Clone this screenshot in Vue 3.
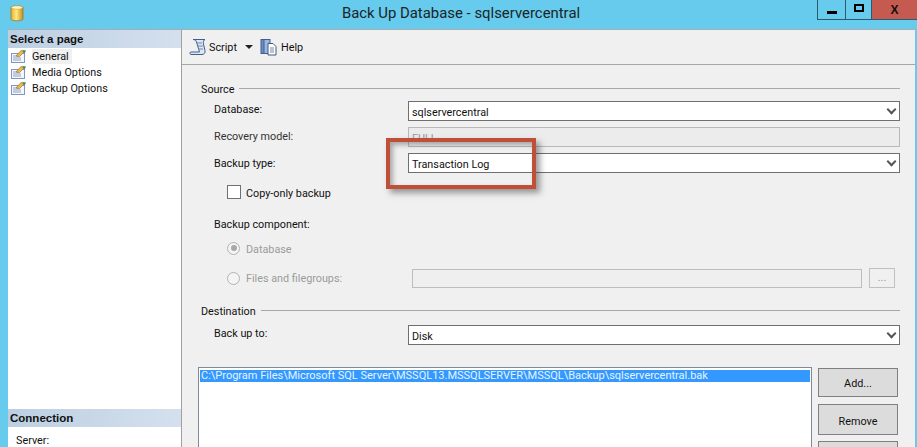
<script setup>
const pages = ['General', 'Media Options', 'Backup Options']
</script>

<template>
  <div class="window">
    <header class="titlebar">
      <svg class="db-icon" width="14" height="18" viewBox="0 0 14 18">
        <defs>
          <linearGradient id="dbg" x1="0" x2="1" y1="0" y2="0">
            <stop offset="0" stop-color="#e8b030" />
            <stop offset="0.45" stop-color="#fde880" />
            <stop offset="1" stop-color="#c98c18" />
          </linearGradient>
        </defs>
        <path d="M1 3.5C1 1.5 13 1.5 13 3.5V15C13 17.4 1 17.4 1 15Z" fill="url(#dbg)" stroke="#9a7a30" stroke-width=".8" />
        <ellipse cx="7" cy="3.5" rx="5.6" ry="1.8" fill="#fff4b8" stroke="#b89a50" stroke-width=".5" />
      </svg>
      <div class="title">Back Up Database - sqlservercentral</div>
      <div class="controls">
        <div class="ctl min"><span class="min-bar"></span></div>
        <div class="ctl max"><span class="max-box"></span></div>
        <div class="ctl close">X</div>
      </div>
    </header>

    <div class="client">
      <aside class="sidebar">
        <div class="side-head">Select a page</div>
        <ul class="pages">
          <li v-for="(p, i) in pages" :key="p" class="page">
            <svg width="16" height="14" viewBox="0 0 16 14">
              <rect x="0.5" y="4.5" width="13" height="9" fill="#f4f6fb" stroke="#8096c0" />
              <path d="M2 7h6M2 9h8M2 11h8" stroke="#8fa3c6" />
              <path d="M5 7L10 1.500l3 1.500-4.500 4.500z" fill="#eebb48" stroke="#8a6a20" stroke-width=".6" />
              <path d="M11 1l4 .5-1.500 3z" fill="#5c8030" />
            </svg>
            <span :class="{ current: i === 0 }">{{ p }}</span>
          </li>
        </ul>
        <div class="side-spacer"></div>
        <div class="side-head">Connection</div>
        <div class="server">Server:</div>
      </aside>

      <main class="main">
        <div class="toolbar">
          <svg width="17" height="18" viewBox="0 0 17 18">
            <path d="M4 1.500H16C14.500 2 14 4 14.500 6L16 12.500C16.500 15 15 16.500 13 16.500H2C1 16.500.5 15 1.500 14H10.500L7.500 4C7 2.500 6 1.500 4 1.500Z" fill="#dfe6f2" stroke="#3f5f92" />
            <path d="M7 5h6M8 8h6M9 11h5" stroke="#6f88b0" />
          </svg>
          <span class="tb-text">Script</span>
          <span class="caret"></span>
          <svg class="help-icon" width="17" height="18" viewBox="0 0 17 18">
            <rect x="1" y="1.500" width="6" height="14" fill="#6d8dc4" stroke="#3f5f92" />
            <rect x="4" y="1.500" width="6" height="14" fill="#9db6de" stroke="#3f5f92" />
            <path d="M8 5.500h5l3 3v8.500H8z" fill="#fff" stroke="#44597f" />
            <path d="M10 10h4M10 12h4M10 14h4" stroke="#7389ad" />
          </svg>
          <span class="tb-text help-text">Help</span>
        </div>

        <div class="form">
          <div class="section-head"><span>Source</span><i></i></div>

          <div class="row r1">
            <label class="raised">Database:</label>
            <div class="select">sqlservercentral<span class="chev"></span></div>
          </div>
          <div class="row r2">
            <label class="muted-label">Recovery model:</label>
            <div class="readonly">FULL</div>
          </div>
          <div class="row r2">
            <label>Backup type:</label>
            <div class="select">Transaction Log<span class="chev"></span></div>
          </div>

          <div class="check-row">
            <span class="checkbox"></span>
            <span class="nudge">Copy-only backup</span>
          </div>

          <div class="component-head">Backup component:</div>
          <div class="radio-row first">
            <span class="radio on"></span>
            <span class="nudge2">Database</span>
          </div>
          <div class="radio-row second">
            <span class="radio"></span>
            <span class="files-label">Files and filegroups:</span>
            <div class="files-input"></div>
            <div class="dots">...</div>
          </div>

          <div class="section-head dest"><span>Destination</span><i></i></div>
          <div class="row backup-row">
            <label class="raised">Back up to:</label>
            <div class="select">Disk<span class="chev"></span></div>
          </div>

          <div class="targets">
            <div class="listbox">
              <div class="list-item">C:\Program Files\Microsoft SQL Server\MSSQL13.MSSQLSERVER\MSSQL\Backup\sqlservercentral.bak</div>
            </div>
            <div class="buttons">
              <button class="btn add">Add...</button>
              <button class="btn remove">Remove</button>
              <button class="btn"></button>
            </div>
          </div>
        </div>

        <div class="callout"></div>
      </main>
    </div>
  </div>
</template>

<style>
html, body { margin: 0; overflow: hidden; }
</style>

<style scoped>
.window {
  width: 917px;
  height: 447px;
  overflow: hidden;
  background: #66cbec;
  font-family: Roboto, "Liberation Sans", sans-serif;
  font-size: 10.800px;
  color: #111;
  display: flex;
  flex-direction: column;
}
.titlebar {
  height: 29px;
  flex: none;
  position: relative;
  display: flex;
  justify-content: center;
  padding-left: 5px;
}
.db-icon { position: absolute; left: 10px; top: 4px; }
.title {
  font-size: 14.900px;
  line-height: 27px;
  color: #1c2428;
}
.controls {
  position: absolute;
  right: 0;
  top: 0;
  display: flex;
  height: 20px;
}
.ctl {
  height: 19px;
  border-bottom: 1px solid #2a5a6c;
  border-left: 1px solid #2a5a6c;
  display: flex;
  align-items: center;
  justify-content: center;
  box-sizing: content-box;
}
.min { width: 27px; }
.max { width: 25px; }
.close {
  width: 45px;
  background: #c45a50;
  color: #111;
  font: 700 12px "Liberation Sans", sans-serif;
}
.min-bar { width: 10px; height: 3px; background: #000; margin-top: 5px; }
.max-box { width: 6px; height: 4px; border: 2px solid #000; margin-top: -4px; }

.client {
  flex: 1;
  min-height: 0;
  display: flex;
  margin: 0 2px 0 8px;
  border-top: 1px solid #a9adb0;
}
.sidebar {
  width: 173px;
  flex: none;
  background: #fff;
  border-right: 1px solid #a0a0a0;
  display: flex;
  flex-direction: column;
}
.side-head {
  height: 18px;
  flex: none;
  padding-left: 2px;
  font: 700 11.500px/18px "Liberation Sans", sans-serif;
  background: linear-gradient(90deg, #bccfe2, #d4e0ee);
  color: #111;
}
.pages {
  list-style: none;
  margin: 0;
  padding: 0;
}
.page {
  height: 16px;
  display: flex;
  align-items: center;
  padding-left: 3px;
  gap: 5px;
}
.current { background: #f0f0f0; padding: 1px 3px 1px 0; }
.side-spacer { flex: 1; }
.server { height: 20px; box-sizing: border-box; padding: 7px 0 0 8px; line-height: 13px; flex: none; }

.main {
  flex: 1;
  min-width: 0;
  background: #f0f0f0;
  position: relative;
}
.toolbar {
  height: 34px;
  border-bottom: 1px solid #a6a6a6;
  display: flex;
  align-items: center;
  padding-left: 7px;
}
.tb-text { margin-left: 3px; }
.help-text { margin-left: 4px; }
.caret {
  width: 0;
  height: 0;
  border: 4px solid transparent;
  border-top-color: #222;
  border-bottom: 0;
  margin-left: 8px;
}
.help-icon { margin-left: 7px; }
.form { padding: 15px 15px 0 19px; }
.section-head {
  height: 16px;
  display: flex;
  align-items: center;
  gap: 5px;
}
.section-head span { padding-top: 2px; }
.section-head i {
  flex: 1;
  height: 1px;
  background: #a8a8a8;
}
.row {
  display: flex;
  align-items: center;
  height: 20px;
  padding-left: 13px;
}
.r1 { margin-top: 5px; }
.r2 { margin-top: 6px; }
.backup-row { margin-top: 7px; }
.row label { width: 194px; flex: none; }
.row .raised { margin-bottom: 4px; }
.muted-label { color: #333; margin-bottom: 2px; }
.select, .readonly {
  flex: 1;
  height: 20px;
  box-sizing: border-box;
  line-height: 22px;
  padding-left: 3px;
  position: relative;
}
.select {
  background: #fff;
  border: 1px solid #6f6f6f;
}
.readonly {
  background: #ececec;
  border: 1px solid #b8b8b8;
  color: #9a9aa8;
}
.chev {
  position: absolute;
  right: 4px;
  top: 4px;
  width: 5px;
  height: 5px;
  border-right: 2px solid #555;
  border-bottom: 2px solid #555;
  transform: rotate(45deg);
}
.check-row {
  height: 18px;
  margin-top: 10px;
  padding-left: 26px;
  display: flex;
  align-items: center;
  gap: 5px;
}
.nudge { padding-top: 2px; }
.nudge2 { padding-top: 3px; }
.checkbox {
  width: 12px;
  height: 12px;
  border: 1px solid #707070;
  background: #fff;
}
.component-head {
  height: 16px;
  line-height: 18px;
  margin-top: 15px;
  padding-left: 13px;
}
.radio-row {
  display: flex;
  align-items: center;
  padding-left: 26px;
  color: #9b9b9b;
}
.first { height: 18px; margin-top: 7px; }
.second { height: 20px; margin-top: 11px; }
.radio {
  width: 11px;
  height: 11px;
  border: 1px solid #b3b3b3;
  border-radius: 50%;
  background: #f4f4f4;
  margin-right: 6px;
  position: relative;
  flex: none;
}
.on::after {
  content: "";
  position: absolute;
  left: 2.500px;
  top: 2.500px;
  width: 6px;
  height: 6px;
  border-radius: 50%;
  background: #a8a8a8;
}
.files-label { width: 166px; flex: none; }
.files-input {
  width: 450px;
  height: 19px;
  box-sizing: border-box;
  border: 1px solid #bdbdbd;
  background: #efefef;
}
.dots {
  width: 26px;
  height: 20px;
  box-sizing: border-box;
  margin-left: 7px;
  border: 1px solid #c0c0c0;
  color: #999;
  text-align: center;
  line-height: 18px;
}
.dest { margin-top: 14px; }
.targets {
  display: flex;
  margin: 22px 0 0 -3px;
  gap: 6px;
}
.listbox {
  width: 610px;
  height: 90px;
  flex: none;
  background: #fff;
  border: 1px solid #7f8a99;
  padding: 2px 1px;
}
.list-item {
  background: #3399ff;
  color: #e8f3ff;
  height: 12px;
  line-height: 12px;
  padding-left: 1px;
  white-space: nowrap;
  font-size: 11px;
}
.buttons {
  display: flex;
  flex-direction: column;
  width: 80px;
  padding-top: 1px;
}
.btn {
  width: 80px;
  height: 30px;
  flex: none;
  box-sizing: border-box;
  border: 1px solid #808080;
  background: #dcdcdc;
  font: inherit;
  color: #111;
  padding: 2px 0 0;
}
.add { height: 29px; margin-bottom: 7px; }
.remove { height: 31px; margin-bottom: 6px; padding-top: 3px; }

.callout {
  position: absolute;
  left: 204px;
  top: 108px;
  width: 142px;
  height: 43px;
  border: 4px solid #bf4f36;
  box-shadow: 4px 4px 6px rgba(60, 60, 60, 0.5), inset 3px 3px 5px rgba(60, 60, 60, 0.4);
}
</style>
